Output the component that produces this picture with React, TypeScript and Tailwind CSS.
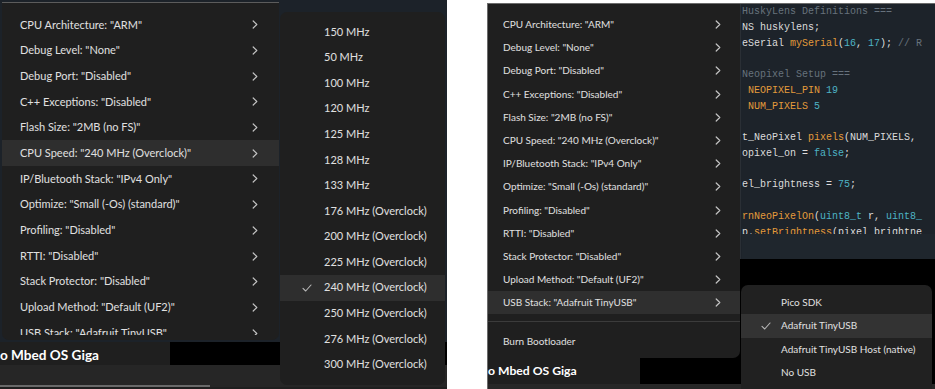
import React from 'react';

// Menu data for the two board-options screenshots
const leftItems = [
  'CPU Architecture: "ARM"',
  'Debug Level: "None"',
  'Debug Port: "Disabled"',
  'C++ Exceptions: "Disabled"',
  'Flash Size: "2MB (no FS)"',
  'CPU Speed: "240 MHz (Overclock)"',
  'IP/Bluetooth Stack: "IPv4 Only"',
  'Optimize: "Small (-Os) (standard)"',
  'Profiling: "Disabled"',
  'RTTI: "Disabled"',
  'Stack Protector: "Disabled"',
  'Upload Method: "Default (UF2)"',
  'USB Stack: "Adafruit TinyUSB"',
];

const speeds = [
  '150 MHz',
  '50 MHz',
  '100 MHz',
  '120 MHz',
  '125 MHz',
  '128 MHz',
  '133 MHz',
  '176 MHz (Overclock)',
  '200 MHz (Overclock)',
  '225 MHz (Overclock)',
  '240 MHz (Overclock)',
  '250 MHz (Overclock)',
  '276 MHz (Overclock)',
  '300 MHz (Overclock)',
];

const usbStacks = ['Pico SDK', 'Adafruit TinyUSB', 'Adafruit TinyUSB Host (native)', 'No USB'];

type Tok = [string, string?];

const code: Tok[][] = [
  [['HuskyLens Definitions ===', 'c']],
  [['NS huskylens;']],
  [['eSerial '], ['mySerial', 'o'], ['('], ['16', 't'], [', '], ['17', 't'], ['); '], ['// R', 'c']],
  [],
  [['Neopixel Setup ===', 'c']],
  [[' '], ['NEOPIXEL_PIN', 'o'], [' '], ['19', 't']],
  [[' '], ['NUM_PIXELS', 'o'], [' '], ['5', 't']],
  [],
  [['t_NeoPixel '], ['pixels', 'o'], ['(NUM_PIXELS,']],
  [['opixel_on = '], ['false', 't'], [';']],
  [],
  [['el_brightness = '], ['75', 't'], [';']],
  [],
  [['rnNeoPixelOn', 'o'], ['('], ['uint8_t', 't'], [' r, '], ['uint8_', 't']],
  [['p.'], ['setBrightness', 'o'], ['(pixel_brightne']],
];

const Chevron = () => (
  <svg width="6" height="9" viewBox="0 0 6 9" fill="none">
    <path d="M1.2 1 L4.8 4.5 L1.2 8" stroke="#c4c4c4" strokeWidth="1.2" strokeLinecap="round" strokeLinejoin="round" />
  </svg>
);

const Check = () => (
  <svg width="10" height="8" viewBox="0 0 10 8" fill="none">
    <path d="M1 4.3 L3.7 7 L9 1" stroke="#b8b8b8" strokeWidth="1.1" strokeLinecap="round" strokeLinejoin="round" />
  </svg>
);

const tokColor = (k?: string) =>
  k === 'c' ? 'text-[#67727c]' : k === 'o' ? 'text-[#e39b3b]' : k === 't' ? 'text-[#4db3c6]' : 'text-[#dcdcdc]';

export default function App() {
  return (
    <div className="w-[935px] h-[389px] bg-white flex overflow-hidden whitespace-nowrap" style={{ fontFamily: 'Lato, "Noto Sans", sans-serif' }}>
      {/* LEFT SCREENSHOT */}
      <div className="relative w-[447px] h-[389px] flex flex-col bg-[#1c2229]">
        <div className="flex-1" />
        <div className="h-[23px] flex">
          <div className="w-[170px] bg-[#1f1f1f] flex items-center text-[13.6px] font-bold text-white leading-none pt-[4px]">
            o Mbed OS Giga
          </div>
          <div className="flex-1 bg-black" />
        </div>
        <div className="h-[20px] bg-[#262626]" />
        <div className="h-[2px] bg-[#262626]">
          <div className="w-[210px] h-full bg-[#6a6a6a]" />
        </div>
        <div className="h-[2px] bg-[#1f1f1f]" />

        {/* board options menu */}
        <div className="absolute left-[2px] top-[2px] w-[277px] h-[338px] bg-[#1f1f1f] border-t border-[#5c5c5c] rounded-b-[7px] pt-[9px] pb-[5px] text-[11px] text-[#e0e0e0]">
          <div className="h-full overflow-hidden">
            {leftItems.map((label, i) => (
              <div
                key={label}
                className={`h-[25.7px] flex items-center justify-between pl-[18px] pr-[21px] ${i === 5 ? 'bg-[#2e2e2e]' : ''}`}
              >
                <span>{label}</span>
                <Chevron />
              </div>
            ))}
          </div>
        </div>

        {/* CPU speed submenu */}
        <div className="absolute left-[280px] top-[12px] w-[165px] h-[373px] bg-[#1f1f1f] rounded-[7px] pt-[7px] text-[11px] text-[#e0e0e0]">
          {speeds.map((s, i) => (
            <div key={s} className={`h-[25.6px] flex items-center pl-[22px] ${i === 10 ? 'bg-[#2e2e2e]' : ''}`}>
              <div className="w-[22px] flex items-center">{i === 10 && <Check />}</div>
              <span>{s}</span>
            </div>
          ))}
        </div>
      </div>

      <div className="w-[40px]" />

      {/* RIGHT SCREENSHOT */}
      <div className="relative w-[448px] h-[386px] mt-[3px] border-t border-l border-[#6b6b6b] flex flex-col bg-black">
        <div className="h-[255px] flex">
          <div className="w-[252px] bg-[#1f1f1f]" />
          <div className="flex-1 bg-[#1d232a] border-l border-[#2a2f35] pl-[1px] flex flex-col">
            <div className="h-[230px] overflow-hidden text-[10px] leading-[15.75px] whitespace-pre" style={{ fontFamily: '"Liberation Mono", monospace' }}>
              {code.map((line, i) => (
                <div key={i} className="h-[15.75px]">
                  {line.map(([t, k], j) => (
                    <span key={j} className={tokColor(k)}>{t}</span>
                  ))}
                </div>
              ))}
            </div>
            <div className="flex-1 bg-[#1f262d]" />
          </div>
        </div>
        <div className="flex-1" />
        <div className="h-[26px] flex">
          <div className="w-[152px] bg-[#1f1f1f] flex items-center text-[12.2px] font-bold text-white leading-none">
            o Mbed OS Giga
          </div>
          <div className="flex-1 bg-black" />
        </div>
        <div className="h-[5px] bg-[#272727]" />

        {/* board options menu */}
        <div className="absolute left-0 top-0 w-[252px] h-[354px] bg-[#1f1f1f] rounded-br-[7px] pt-[9px] text-[10px] text-[#e0e0e0]">
          {leftItems.map((label, i) => (
            <div
              key={label}
              className={`h-[23.2px] flex items-center justify-between pl-[15px] pr-[19px] ${i === 12 ? 'bg-[#2f2f2f]' : ''}`}
            >
              <span>{label}</span>
              <Chevron />
            </div>
          ))}
          <div className="mt-[7px] h-px bg-[#3b3b3b]" />
          <div className="mt-[8px] h-[23px] flex items-center pl-[15px]">Burn Bootloader</div>
        </div>

        {/* USB stack submenu */}
        <div className="absolute left-[253px] top-[281px] w-[191px] h-[110px] bg-[#212121] rounded-t-[7px] pt-[6px] text-[10px] text-[#e0e0e0]">
          {usbStacks.map((s, i) => (
            <div key={s} className={`h-[23.3px] flex items-center pl-[20px] ${i === 1 ? 'bg-[#333333]' : ''}`}>
              <div className="w-[20px] flex items-center">{i === 1 && <Check />}</div>
              <span>{s}</span>
            </div>
          ))}
        </div>
      </div>
    </div>
  );
}
